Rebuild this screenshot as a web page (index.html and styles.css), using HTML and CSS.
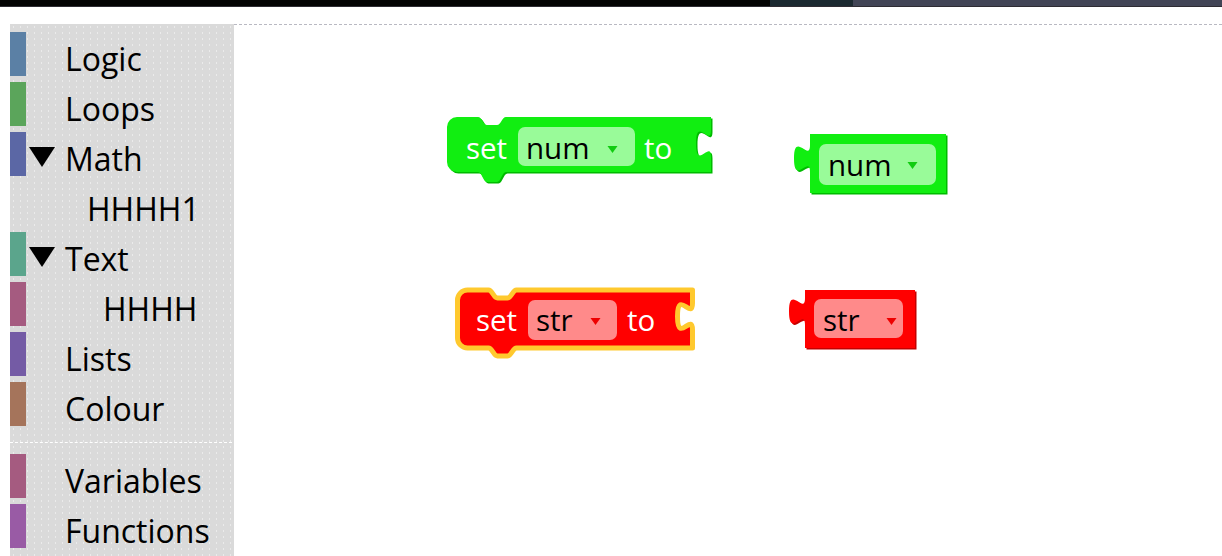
FILE: index.html
```html
<!DOCTYPE html>
<html lang="en">
<head>
<meta charset="utf-8">
<title>Blockly workspace</title>
<link rel="stylesheet" href="styles.css">
</head>
<body>
<div class="topbar">
  <div class="seg seg-black"></div>
  <div class="seg seg-teal"></div>
  <div class="seg seg-slate"></div>
</div>
<div class="main">
  <nav class="toolbox">
    <div class="row"><span class="strip c-logic"></span><span class="twisty"></span><span class="label">Logic</span></div>
    <div class="row"><span class="strip c-loops"></span><span class="twisty"></span><span class="label">Loops</span></div>
    <div class="row"><span class="strip c-math"></span><span class="twisty"><svg class="tri" viewBox="0 0 26 20"><polygon points="0,0 26,0 13,20"/></svg></span><span class="label">Math</span></div>
    <div class="row"><span class="strip c-none"></span><span class="twisty"></span><span class="label indent1">HHHH1</span></div>
    <div class="row"><span class="strip c-text"></span><span class="twisty"><svg class="tri" viewBox="0 0 26 20"><polygon points="0,0 26,0 13,20"/></svg></span><span class="label">Text</span></div>
    <div class="row"><span class="strip c-vars"></span><span class="twisty"></span><span class="label indent2">HHHH</span></div>
    <div class="row"><span class="strip c-lists"></span><span class="twisty"></span><span class="label">Lists</span></div>
    <div class="row"><span class="strip c-colour"></span><span class="twisty"></span><span class="label">Colour</span></div>
    <div class="sep"></div>
    <div class="row"><span class="strip c-vars"></span><span class="twisty"></span><span class="label">Variables</span></div>
    <div class="row"><span class="strip c-funcs"></span><span class="twisty"></span><span class="label">Functions</span></div>
  </nav>
  <div class="workspace">
    <svg class="canvas" width="988" height="531" viewBox="234 25 988 531">
      <!-- green statement block: set num to -->
      <g>
        <path class="shade-green" transform="translate(1.5,1.5)" d="M447,127 A10,10 0 0 1 457,117 H478 C482,117 483,125 487,125 H497 C501,125 502,117 506,117 H711 V130 c0,18 -15,-14.4 -15,13.5 s15,-4.5 15,13.5 V172 H506 C502,172 501,182 497,182 H487 C483,182 482,172 478,172 H457 A10,10 0 0 1 447,162 Z"/>
        <path class="fill-green" d="M447,127 A10,10 0 0 1 457,117 H478 C482,117 483,125 487,125 H497 C501,125 502,117 506,117 H711 V130 c0,18 -15,-14.4 -15,13.5 s15,-4.5 15,13.5 V172 H506 C502,172 501,182 497,182 H487 C483,182 482,172 478,172 H457 A10,10 0 0 1 447,162 Z"/>
        <text class="blk-label" x="466" y="159">set</text>
        <rect class="field-green" x="518" y="127" width="117" height="39" rx="7"/>
        <text class="field-text" x="526" y="159">num</text>
        <polygon class="arrow-green" points="607.5,146 617.5,146 612.5,153"/>
        <text class="blk-label" x="644" y="159">to</text>
      </g>
      <!-- green value block: num -->
      <g>
        <path class="shade-green" transform="translate(1.5,1.5)" d="M810,134 H946 V193 H810 V172 c0,-18 -16,14.4 -16,-13.5 s16,4.5 16,-13.5 Z"/>
        <path class="fill-green" d="M810,134 H946 V193 H810 V172 c0,-18 -16,14.4 -16,-13.5 s16,4.5 16,-13.5 Z"/>
        <rect class="field-green" x="819" y="144" width="117" height="41" rx="7"/>
        <text class="field-text" x="828" y="176">num</text>
        <polygon class="arrow-green" points="907.5,162 917.5,162 912.5,169"/>
      </g>
      <!-- red statement block (selected): set str to -->
      <g>
        <path class="fill-red" d="M457.5,300 A10,10 0 0 1 467.5,290 H488.5 C492.5,290 493.5,298 497.5,298 H507.5 C511.5,298 512.5,290 516.5,290 H692.5 V303 c0,18 -15,-14.4 -15,13.5 s15,-4.5 15,13.5 V348 H516.5 C512.5,348 511.5,356 507.5,356 H497.5 C493.5,356 492.5,348 488.5,348 H467.5 A10,10 0 0 1 457.5,338 Z"/>
        <path class="selected" d="M457.5,300 A10,10 0 0 1 467.5,290 H488.5 C492.5,290 493.5,298 497.5,298 H507.5 C511.5,298 512.5,290 516.5,290 H692.5 V303 c0,18 -15,-14.4 -15,13.5 s15,-4.5 15,13.5 V348 H516.5 C512.5,348 511.5,356 507.5,356 H497.5 C493.5,356 492.5,348 488.5,348 H467.5 A10,10 0 0 1 457.5,338 Z"/>
        <text class="blk-label" x="476" y="331">set</text>
        <rect class="field-red" x="528" y="300" width="89" height="40" rx="7"/>
        <text class="field-text" x="536" y="331">str</text>
        <polygon class="arrow-red" points="590.5,318 600.5,318 595.5,325"/>
        <text class="blk-label" x="627" y="331">to</text>
      </g>
      <!-- red value block: str -->
      <g>
        <path class="shade-red" transform="translate(1.5,1.5)" d="M805,290 H915 V348 H805 V325 c0,-18 -16,14.4 -16,-13.5 s16,4.5 16,-13.5 Z"/>
        <path class="fill-red" d="M805,290 H915 V348 H805 V325 c0,-18 -16,14.4 -16,-13.5 s16,4.5 16,-13.5 Z"/>
        <rect class="field-red" x="814" y="299" width="89" height="39" rx="7"/>
        <text class="field-text" x="823" y="331">str</text>
        <polygon class="arrow-red" points="886.5,318 896.5,318 891.5,325"/>
      </g>
    </svg>
  </div>
</div>
</body>
</html>
```
FILE: styles.css
```css
* { box-sizing: border-box; }
html, body { margin: 0; padding: 0; height: 100%; overflow: hidden; background: #fff; }
body { font-family: "Open Sans", "Noto Sans", sans-serif; color: #000; }

.topbar { display: flex; height: 7px; border-bottom: 1px solid #2e2c33; }
.seg { height: 6px; }
.seg-black { width: 770px; background: #030303; }
.seg-teal { width: 83px; background: #1c2a31; }
.seg-slate { flex: 1; background: #424556; }

.main { display: flex; margin-top: 17px; height: calc(100vh - 24px); padding-left: 10px; }

.toolbox {
  width: 224px;
  flex: none;
  padding-top: 8px;
  background-color: #dadada;
  background-image: radial-gradient(circle, rgba(255,255,255,0.45) 0.5px, transparent 0.9px);
  background-size: 7px 6px;
}
.row { display: flex; height: 44px; margin-bottom: 6px; }
.strip { width: 16px; height: 44px; flex: none; }
.twisty { width: 39px; flex: none; }
.tri { display: block; width: 26px; height: 20px; margin: 15px 0 0 3px; fill: #000; }
.label { font-size: 32px; line-height: 44px; padding-top: 5px; white-space: nowrap; }
.indent1 { padding-left: 22px; }
.indent2 { padding-left: 38px; }
.sep { height: 1px; margin: 16px 2px 11px 0; border-top: 1px dashed #fff; }

.c-logic { background: #5b80a5; }
.c-loops { background: #5ba55b; }
.c-math { background: #5b67a5; }
.c-none { background: transparent; }
.c-text { background: #5ba58c; }
.c-vars { background: #a55b80; }
.c-lists { background: #745ba5; }
.c-colour { background: #a5745b; }
.c-funcs { background: #995ba5; }

.workspace { flex: 1; border-top: 1px dashed #b9b9c2; background: #fff; }
.canvas { display: block; }

.fill-green { fill: #11ee11; }
.shade-green { fill: #00bb00; }
.field-green { fill: #99fb99; }
.arrow-green { fill: #11cc11; }
.fill-red { fill: #ff0000; }
.shade-red { fill: #c40000; }
.field-red { fill: #ff8a8a; }
.arrow-red { fill: #ee0000; }
.selected { fill: none; stroke: #ffc92e; stroke-width: 5; stroke-linejoin: round; }

.blk-label { fill: #fff; font-family: "Open Sans", "Noto Sans", sans-serif; font-size: 29.5px; }
.field-text { fill: #000; font-family: "Open Sans", "Noto Sans", sans-serif; font-size: 29.5px; }
```
